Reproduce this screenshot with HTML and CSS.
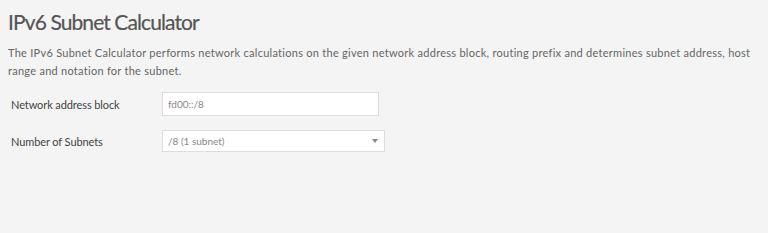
FILE: index.html
```html
<!DOCTYPE html>
<html lang="en">
<head>
    <meta charset="UTF-8">
    <title>IPv6 Subnet Calculator</title>
    <link rel="stylesheet" href="styles.css">
</head>
<body>
    <div class="calc">
        <h1>IPv6 Subnet Calculator</h1>
        <p class="intro">The IPv6 Subnet Calculator performs network calculations on the given network address block, routing prefix and determines subnet address, host range and notation for the subnet.</p>

        <form class="calc-form">
            <div class="row">
                <label for="network">Network address block</label>
                <input type="text" id="network" class="field field-text" value="fd00::/8">
            </div>
            <div class="row">
                <label for="subnets">Number of Subnets</label>
                <div class="select-wrap">
                    <select id="subnets" class="field field-select">
                        <option>/8 (1 subnet)</option>
                    </select>
                    <span class="caret"></span>
                </div>
            </div>
        </form>
    </div>
</body>
</html>
```

FILE: styles.css
```css
body {
    margin: 0;
    background: #f3f4f3;
    font-family: 'Lato', 'Open Sans', sans-serif;
    color: #666;
}

.calc {
    padding: 8px 8px 0 8px;
}

h1 {
    margin: 0;
    font-size: 21px;
    font-weight: 400;
    color: #555;
    line-height: 28px;
    letter-spacing: -0.9px;
    -webkit-text-stroke: 0.2px #555;
}

.intro {
    margin: 8px 0 0 0;
    font-size: 11px;
    line-height: 18px;
    color: #666;
    letter-spacing: 0.27px;
}

.calc-form {
    margin-top: 12px;
}

.row {
    display: flex;
    align-items: center;
    margin-bottom: 14px;
}

.row label {
    width: 151px;
    padding-left: 3px;
    font-size: 11px;
    color: #444;
    letter-spacing: -0.1px;
}

.field {
    box-sizing: border-box;
    display: block;
    height: 24px;
    border: 1px solid #ddd;
    background: #fff;
    font-family: inherit;
    font-size: 10px;
    color: #888;
    padding: 0 5px;
    margin: 0;
}

.field-text {
    width: 217px;
}

.select-wrap {
    position: relative;
}

.field-select {
    width: 223px;
    height: 22px;
    appearance: none;
    -webkit-appearance: none;
    border-radius: 0;
    padding: 0 5px;
}

.caret {
    position: absolute;
    right: 7px;
    top: 9px;
    border-left: 3px solid transparent;
    border-right: 3px solid transparent;
    border-top: 4px solid #888;
    pointer-events: none;
}
```
